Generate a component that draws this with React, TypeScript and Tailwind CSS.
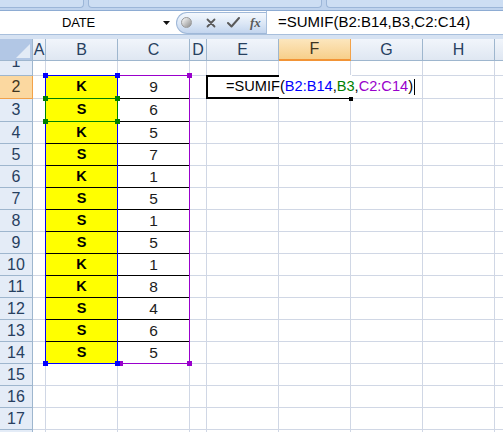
import React from 'react';

const FONT = { fontFamily: '"Liberation Sans", Arial, sans-serif' };

// column widths include the 1px right gridline
const cols = [
  { k: 'A', w: 'w-[13px]' },
  { k: 'B', w: 'w-[72px]' },
  { k: 'C', w: 'w-[72px]' },
  { k: 'D', w: 'w-[17px]' },
  { k: 'E', w: 'w-[72px]' },
  { k: 'F', w: 'w-[72px]' },
  { k: 'G', w: 'w-[72px]' },
  { k: 'H', w: 'w-[72px]' },
  { k: 'I', w: 'w-[72px]' },
];

const data: [string, number][] = [
  ['K', 9],
  ['S', 6],
  ['K', 5],
  ['S', 7],
  ['K', 1],
  ['S', 5],
  ['S', 1],
  ['S', 5],
  ['K', 1],
  ['K', 8],
  ['S', 4],
  ['S', 6],
  ['S', 5],
];

function Ribbon() {
  return (
    <div className="h-[11px] bg-[#bfd3ed] border-b border-[#8eacd3] flex gap-[4px] overflow-hidden">
      <div className="w-[84px] h-[8px] bg-[#cddef3] border-b border-r border-[#9cb6d8] rounded-br-[4px]" />
      <div className="w-[234px] h-[8px] bg-[#cddef3] border-b border-x border-[#9cb6d8] rounded-b-[4px]" />
      <div className="flex-1 h-[8px] bg-[#cddef3] border-b border-l border-[#9cb6d8] rounded-bl-[4px]" />
    </div>
  );
}

function FormulaBar() {
  return (
    <div className="h-[24px] bg-white flex items-center border-b border-[#a8bfdc]">
      <div className="w-[176px] h-full flex items-center relative">
        <span className="pl-[62px] text-[13px] tracking-[-0.2px] text-black" style={FONT}>
          DATE
        </span>
        <svg className="absolute left-[163px] top-[10px]" width="7" height="4" viewBox="0 0 7 4">
          <path d="M0 0h7L3.5 4z" fill="#111" />
        </svg>
      </div>
      <div className="w-[90px] h-[22px] rounded-l-full border border-r-0 border-[#9fb8d8] bg-gradient-to-b from-[#f4f8fd] via-[#dde8f6] to-[#c3d5ee] flex items-center">
        <div className="ml-[4px] w-[11px] h-[11px] rounded-full bg-gradient-to-br from-[#ffffff] via-[#c4c4c4] to-[#8d8d8d] border border-[#9a9a9a]" />
        <svg className="ml-[14px]" width="10" height="10" viewBox="0 0 10 10">
          <path d="M1.5 1.5l7 7M8.5 1.5l-7 7" stroke="#5a5a5a" strokeWidth="1.8" strokeLinecap="round" />
        </svg>
        <svg className="ml-[11px]" width="13" height="11" viewBox="0 0 13 11">
          <path d="M1 6l3.5 3.5L12 1" stroke="#5a5a5a" strokeWidth="2" fill="none" strokeLinecap="round" strokeLinejoin="round" />
        </svg>
        <span
          className="ml-[10px] text-[13px] italic font-bold text-[#5a5a5a] leading-none"
          style={{ fontFamily: '"Liberation Serif", "Times New Roman", serif' }}
        >
          fx
        </span>
      </div>
      <div className="flex-1 h-full border-l border-[#a8bfdc] flex items-center pl-[11px]">
        <span className="text-[15px] text-black whitespace-nowrap" style={FONT}>
          =SUMIF(B2:B14,B3,C2:C14)
        </span>
      </div>
    </div>
  );
}

function HeaderRow() {
  return (
    <div className="flex h-[22px]">
      <div className="w-[33px] shrink-0 bg-[#b2c7e5] border-r border-b border-[#9eb6ce] relative overflow-hidden">
        <svg className="absolute right-[2px] bottom-[2px]" width="14" height="14" viewBox="0 0 14 14">
          <path d="M14 0V14H0z" fill="#e3ebf6" />
        </svg>
      </div>
      {cols.map((c) => (
        <div
          key={c.k}
          className={`${c.w} shrink-0 flex items-center justify-center border-r text-[16px] ${
            c.k === 'F'
              ? 'bg-gradient-to-b from-[#fce6bd] to-[#f7cf8a] border-[#f2a24a] border-b-2 border-b-[#f29436] text-[#3d3421]'
              : 'bg-gradient-to-b from-[#f1f5fb] to-[#dfe7f2] border-[#9eb6ce] border-b text-[#27405f]'
          }`}
          style={FONT}
        >
          {c.k === 'I' ? null : c.k}
        </div>
      ))}
    </div>
  );
}

function RowHeader({ n, h, active }: { n: number; h: string; active?: boolean }) {
  return (
    <div
      className={`w-[33px] shrink-0 ${h} overflow-hidden border-r border-b flex justify-center text-[16px] ${
        active ? 'bg-[#fbd8a0] border-[#f2a24a] text-[#3d3421]' : 'bg-[#e4ecf7] border-[#9eb6ce] text-[#27405f]'
      }`}
      style={FONT}
    >
      {n === 1 ? (
        <div className="h-[22px] mt-[-10px] flex items-center">1</div>
      ) : n === 18 ? null : (
        <div className="h-full flex items-center">{n}</div>
      )}
    </div>
  );
}

function Row({ n }: { n: number }) {
  const h = n === 1 ? 'h-[15px]' : n === 2 || n === 3 ? 'h-[23px]' : 'h-[22px]';
  const d = n >= 2 && n <= 14 ? data[n - 2] : null;
  return (
    <div className="flex">
      <RowHeader n={n} h={h} active={n === 2} />
      {cols.map((c) => {
        let cls = 'border-[#d0d7e5]';
        let content: React.ReactNode = null;
        if (d && c.k === 'B') {
          cls = 'border-black bg-[#ffff00]';
          content = <span className="font-bold text-[14.5px] text-black">{d[0]}</span>;
        } else if (d && c.k === 'C') {
          cls = 'border-black bg-white';
          content = <span className="text-[15.5px] text-[#1c1c1c]">{d[1]}</span>;
        } else if (d && c.k === 'A') {
          cls = 'border-[#d0d7e5] border-r-black';
        } else if (n === 1 && (c.k === 'B' || c.k === 'C')) {
          cls = 'border-[#d0d7e5] border-b-black';
        }
        return (
          <div
            key={c.k}
            className={`${c.w} ${h} shrink-0 border-r border-b flex items-center justify-center ${cls}`}
            style={FONT}
          >
            {content}
          </div>
        );
      })}
    </div>
  );
}

function Handle({ x, y, color }: { x: number; y: number; color: string }) {
  return (
    <div
      className={`absolute w-[5px] h-[5px] ${color}`}
      style={{ left: x - 2, top: y - 2 }}
    />
  );
}

function Overlays() {
  return (
    <>
      {/* range highlights of the formula references */}
      <div className="absolute left-[117px] top-[75px] w-[73px] h-[289px] border border-[#9900cc]" />
      <div className="absolute left-[45px] top-[75px] w-[73px] h-[289px] border border-[#0000ff]" />
      <div className="absolute left-[45px] top-[98px] w-[73px] h-[24px] border border-[#008000]" />
      <Handle x={189} y={75} color="bg-[#9900cc]" />
      <Handle x={189} y={363} color="bg-[#9900cc]" />
      <Handle x={120} y={363} color="bg-[#9900cc]" />
      <Handle x={45} y={75} color="bg-[#0000ff]" />
      <Handle x={117} y={75} color="bg-[#0000ff]" />
      <Handle x={45} y={363} color="bg-[#0000ff]" />
      <Handle x={117} y={363} color="bg-[#0000ff]" />
      <Handle x={45} y={98} color="bg-[#008000]" />
      <Handle x={117} y={98} color="bg-[#008000]" />
      <Handle x={45} y={121} color="bg-[#008000]" />
      <Handle x={117} y={121} color="bg-[#008000]" />

      {/* in-cell editor */}
      <div className="absolute left-[206px] top-[75px] w-[146px] h-[24px] bg-white" />
      <div className="absolute left-[352px] top-[76px] w-[60px] h-[22px] bg-white" />
      <div className="absolute left-[206px] top-[75px] w-[73px] h-[24px] border-2 border-r-0 border-black" />
      <div className="absolute left-[278px] top-[98px] w-[73px] h-[1px] bg-black" />
      <div className="absolute left-[349px] top-[97px] w-[4px] h-[4px] bg-black" />
      <div
        className="absolute left-[226px] top-[76px] h-[22px] flex items-center text-[14.6px] whitespace-nowrap"
        style={FONT}
      >
        <span className="text-black">=SUMIF(</span>
        <span className="text-[#0000ff]">B2:B14</span>
        <span className="text-black">,</span>
        <span className="text-[#008000]">B3</span>
        <span className="text-black">,</span>
        <span className="text-[#9900cc]">C2:C14</span>
        <span className="text-black">)</span>
        <span className="ml-[1px] w-[1px] h-[16px] bg-black" />
      </div>
    </>
  );
}

export default function App() {
  const rows = Array.from({ length: 18 }, (_, i) => i + 1);
  return (
    <div className="relative w-[503px] h-[432px] overflow-hidden bg-white">
      <Ribbon />
      <FormulaBar />
      <div className="h-[4px] bg-[#d6e2f2]" />
      <HeaderRow />
      {rows.map((n) => (
        <Row key={n} n={n} />
      ))}
      <Overlays />
    </div>
  );
}
